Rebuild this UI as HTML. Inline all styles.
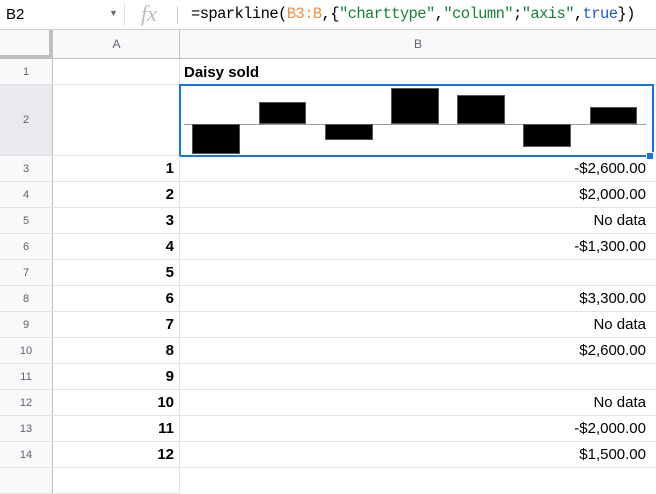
<!DOCTYPE html><html><head><style>
body{margin:0;width:656px;height:476px;overflow:hidden;background:#fff;font-family:"Liberation Sans",Arial,sans-serif;position:relative}
.a{position:absolute;box-sizing:border-box}
.rh{position:absolute;left:0;width:53px;background:#f8f9fa;color:#5f6368;font-size:11px;text-align:center;border-right:1px solid #c0c0c0;border-bottom:1px solid #e2e3e3;box-sizing:border-box}
.ca{position:absolute;left:54px;width:126px;border-right:1px solid #e2e3e3;border-bottom:1px solid #e2e3e3;box-sizing:border-box;text-align:right;padding-right:5px;font-weight:bold;font-size:15px;color:#000}
.cb{position:absolute;left:180px;width:476px;border-bottom:1px solid #e2e3e3;box-sizing:border-box;text-align:right;padding-right:10px;font-size:15px;color:#000}
.bar{position:absolute;background:#000;border:1px solid #555;box-sizing:border-box}
</style></head><body>
<div class="a" style="left:0;top:0;width:656px;height:30px;border-bottom:1px solid #d0d0d0;font-size:15px">
<span style="position:absolute;left:6px;top:6px">B2</span>
<span style="position:absolute;left:109px;top:8px;font-size:9px;color:#666">▼</span>
<div style="position:absolute;left:124px;top:4px;width:1px;height:22px;background:#e0e0e0"></div>
<span style="position:absolute;left:141px;top:1px;font-family:'Liberation Serif',serif;font-style:italic;font-size:22px;color:#bbb">fx</span>
<div style="position:absolute;left:177px;top:6px;width:1px;height:18px;background:#ccc"></div>
<span style="position:absolute;left:191px;top:5px;font-family:'Liberation Mono',monospace;font-size:15.5px;letter-spacing:-0.6px">=sparkline(<span style="color:#f0913b">B3:B</span>,{<span style="color:#188038">"charttype"</span>,<span style="color:#188038">"column"</span>;<span style="color:#188038">"axis"</span>,<span style="color:#1a56d6">true</span>})</span>
</div>
<div class="a" style="left:0;top:30px;width:656px;height:29px;background:#f8f9fa;border-bottom:1px solid #c0c0c0"></div>
<div class="a" style="left:0;top:30px;width:53px;height:29px;background:#f8f9fa;border-right:4px solid #c0c0c0;border-bottom:4px solid #c0c0c0"></div>
<div class="a" style="left:54px;top:30px;width:126px;height:29px;border-right:1px solid #c0c0c0;text-align:center;line-height:29px;font-size:12px;color:#5f6368">A</div>
<div class="a" style="left:180px;top:30px;width:476px;height:29px;text-align:center;line-height:29px;font-size:12px;color:#5f6368">B</div>
<div class="rh" style="top:59px;height:26px;line-height:26px">1</div>
<div class="ca" style="top:59px;height:26px"></div>
<div class="cb" style="top:59px;height:26px;text-align:left;padding-left:4px;font-weight:bold;line-height:28px">Daisy sold</div>
<div class="rh" style="top:85px;height:71px;line-height:71px;background:#e8eaed">2</div>
<div class="ca" style="top:85px;height:71px"></div>
<div class="a" style="left:179px;top:84px;width:475px;height:73px;border:2px solid #1a73e8"></div>
<div class="a" style="left:646px;top:152px;width:8px;height:8px;background:#1a73e8;border:1px solid #fff"></div>
<div class="a" style="left:184px;top:124px;width:462px;height:1px;background:#999"></div>
<div class="bar" style="left:192px;top:124px;width:48px;height:30px"></div>
<div class="bar" style="left:259px;top:102px;width:47px;height:22px"></div>
<div class="bar" style="left:325px;top:124px;width:48px;height:16px"></div>
<div class="bar" style="left:391px;top:88px;width:48px;height:36px"></div>
<div class="bar" style="left:457px;top:95px;width:48px;height:29px"></div>
<div class="bar" style="left:523px;top:124px;width:48px;height:23px"></div>
<div class="bar" style="left:590px;top:107px;width:47px;height:17px"></div>
<div class="rh" style="top:156px;height:26px;line-height:26px">3</div><div class="ca" style="top:156px;height:26px;line-height:26px">1</div><div class="cb" style="top:156px;height:26px;line-height:26px">-$2,600.00</div>
<div class="rh" style="top:182px;height:26px;line-height:26px">4</div><div class="ca" style="top:182px;height:26px;line-height:26px">2</div><div class="cb" style="top:182px;height:26px;line-height:26px">$2,000.00</div>
<div class="rh" style="top:208px;height:26px;line-height:26px">5</div><div class="ca" style="top:208px;height:26px;line-height:26px">3</div><div class="cb" style="top:208px;height:26px;line-height:26px">No data</div>
<div class="rh" style="top:234px;height:26px;line-height:26px">6</div><div class="ca" style="top:234px;height:26px;line-height:26px">4</div><div class="cb" style="top:234px;height:26px;line-height:26px">-$1,300.00</div>
<div class="rh" style="top:260px;height:26px;line-height:26px">7</div><div class="ca" style="top:260px;height:26px;line-height:26px">5</div><div class="cb" style="top:260px;height:26px;line-height:26px"></div>
<div class="rh" style="top:286px;height:26px;line-height:26px">8</div><div class="ca" style="top:286px;height:26px;line-height:26px">6</div><div class="cb" style="top:286px;height:26px;line-height:26px">$3,300.00</div>
<div class="rh" style="top:312px;height:26px;line-height:26px">9</div><div class="ca" style="top:312px;height:26px;line-height:26px">7</div><div class="cb" style="top:312px;height:26px;line-height:26px">No data</div>
<div class="rh" style="top:338px;height:26px;line-height:26px">10</div><div class="ca" style="top:338px;height:26px;line-height:26px">8</div><div class="cb" style="top:338px;height:26px;line-height:26px">$2,600.00</div>
<div class="rh" style="top:364px;height:26px;line-height:26px">11</div><div class="ca" style="top:364px;height:26px;line-height:26px">9</div><div class="cb" style="top:364px;height:26px;line-height:26px"></div>
<div class="rh" style="top:390px;height:26px;line-height:26px">12</div><div class="ca" style="top:390px;height:26px;line-height:26px">10</div><div class="cb" style="top:390px;height:26px;line-height:26px">No data</div>
<div class="rh" style="top:416px;height:26px;line-height:26px">13</div><div class="ca" style="top:416px;height:26px;line-height:26px">11</div><div class="cb" style="top:416px;height:26px;line-height:26px">-$2,000.00</div>
<div class="rh" style="top:442px;height:26px;line-height:26px">14</div><div class="ca" style="top:442px;height:26px;line-height:26px">12</div><div class="cb" style="top:442px;height:26px;line-height:26px">$1,500.00</div>
<div class="rh" style="top:468px;height:26px"></div><div class="ca" style="top:468px;height:26px"></div>
</body></html>
